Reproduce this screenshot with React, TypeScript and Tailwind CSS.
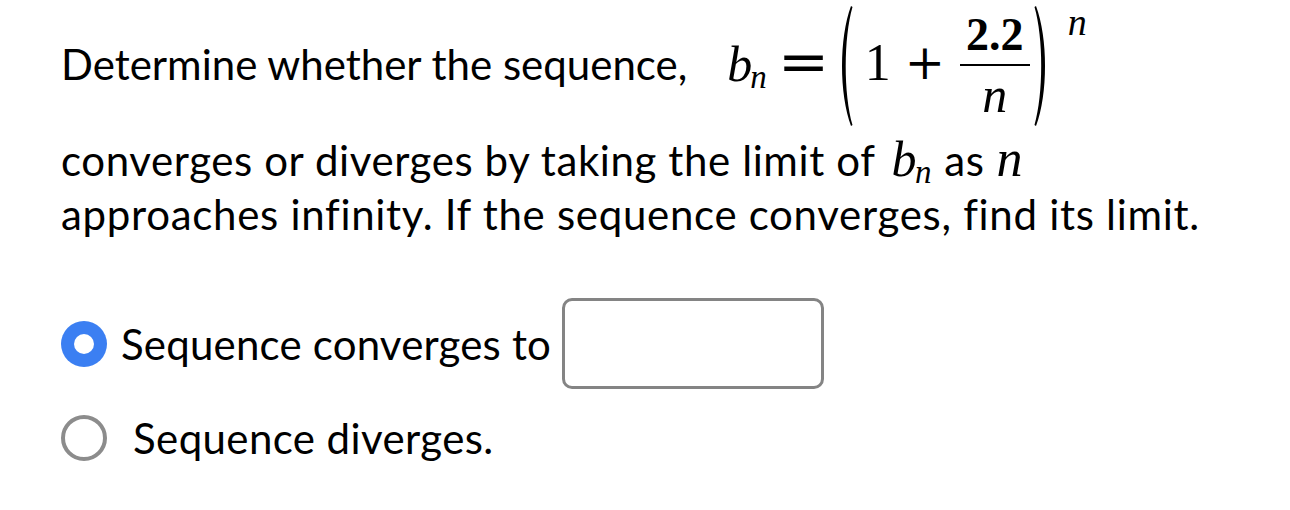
const sans = "font-['Lato','Open_Sans',sans-serif] [font-variant-ligatures:none]";
const serif = "font-['Liberation_Serif','Times_New_Roman',serif]";
const symbol = "font-['DejaVu_Serif','Liberation_Serif',serif]";

function Paren({ right = false }: { right?: boolean }) {
  return (
    <svg width="17" height="122" viewBox="0 0 17 122" className={right ? "-scale-x-100" : ""}>
      <path d="M15 1 C3 33 3 89 15 121 L16.5 120 C7.5 89 7.5 33 16.5 2 Z" fill="#000" />
    </svg>
  );
}

function Bn() {
  return (
    <span className={`${serif} italic inline-flex items-baseline`}>
      <span className="text-[50px] leading-none">b</span>
      <span className="text-[33px] leading-none -ml-[2px] translate-y-[7px]">n</span>
    </span>
  );
}

export default function App() {
  return (
    <div className={`w-[1290px] h-[510px] bg-white text-black ${sans} pl-[61px]`}>
      <div className="flex items-center h-[132px]">
        <span className="text-[42px] leading-none translate-y-[-2px]">Determine whether the sequence,</span>
        <span className="ml-[40px] translate-y-[-2px]">
          <Bn />
        </span>
        <span className={`${symbol} text-[56px] leading-none ml-[13px] translate-y-[-4px] scale-x-110`}>=</span>
        <span className="ml-[9px] flex items-center">
          <Paren />
          <span className={`${serif} text-[52px] leading-none ml-[12px] translate-y-[-3px]`}>1</span>
          <span className={`${symbol} text-[48px] leading-none ml-[14px] translate-y-[-4px]`}>+</span>
          <span className="ml-[15px] flex flex-col items-center w-[70px]">
            <span className={`${serif} text-[46px] leading-none font-bold`}>2.2</span>
            <span className="w-full h-[2px] bg-black mt-[6px] mb-[4px]" />
            <span className={`${serif} italic text-[50px] leading-none`}>n</span>
          </span>
          <span className="ml-[4px]">
            <Paren right />
          </span>
          <span className={`${serif} italic text-[38px] leading-none self-start ml-[17px] -mt-[2px]`}>n</span>
        </span>
      </div>
      <div className="text-[42px] leading-[54px] flex items-baseline tracking-[0.6px]">
        <span>converges or diverges by taking the limit of</span>
        <span className="ml-[16px]">
          <Bn />
        </span>
        <span className="ml-[12px]">as</span>
        <span className={`${serif} italic text-[52px] ml-[12px]`}>n</span>
      </div>
      <div className="text-[42px] leading-[54px] tracking-[0.7px]">
        approaches infinity. If the sequence converges, find its limit.
      </div>
      <div className="flex items-center h-[91px] mt-[57px]">
        <span className="w-[46px] h-[46px] rounded-full bg-[#3b7ff2] flex items-center justify-center">
          <span className="w-[20px] h-[20px] rounded-full bg-white" />
        </span>
        <span className="text-[42px] leading-none ml-[14px] tracking-[0.2px]">Sequence converges to</span>
        <span className="ml-[11px] w-[262px] h-[91px] rounded-[10px] border-[3px] border-[#848484] bg-white" />
      </div>
      <div className="flex items-center h-[48px] mt-[25px]">
        <span className="w-[46px] h-[46px] rounded-full border-[4px] border-[#8c8c8c] bg-white" />
        <span className="text-[42px] leading-none ml-[26px] tracking-[0.4px]">Sequence diverges.</span>
      </div>
    </div>
  );
}
